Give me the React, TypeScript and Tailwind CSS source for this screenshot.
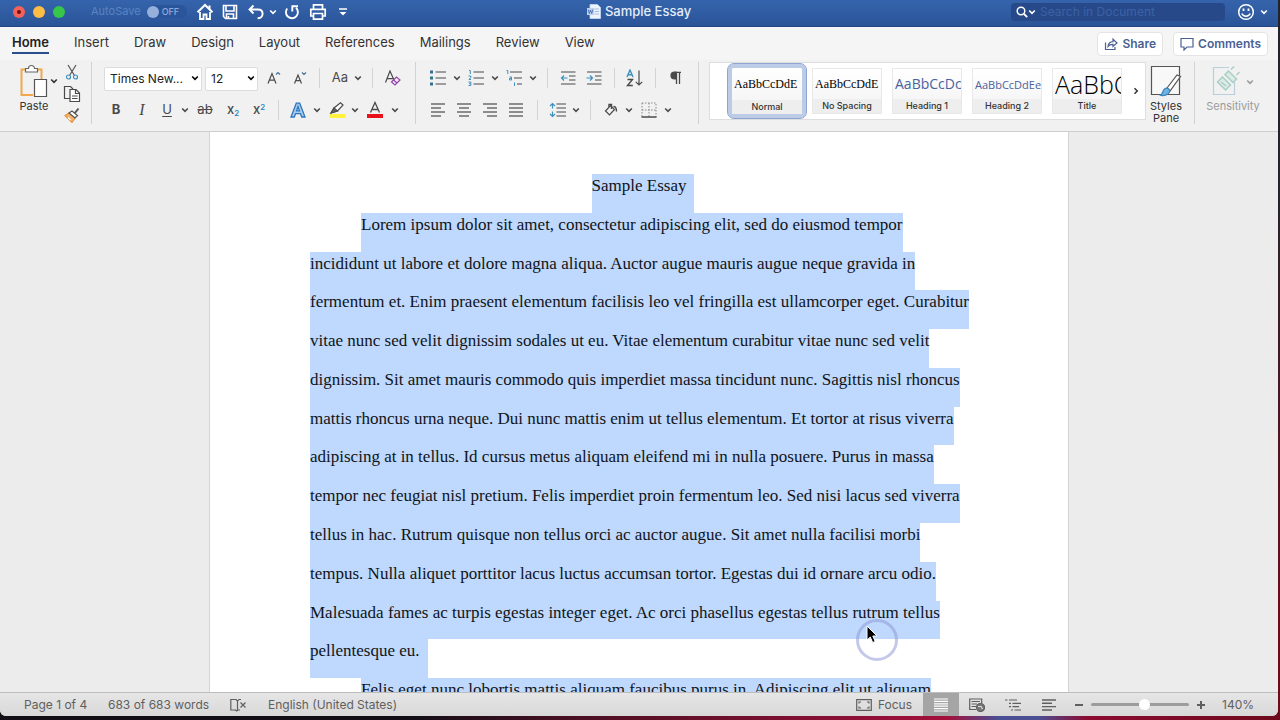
import type { ReactNode } from 'react';

interface EssayLine {
    text: string;
    indent?: boolean;
    centered?: boolean;
    end?: boolean;
}

interface StylePreset {
    name: string;
    sample: string;
    sampleClass: string;
    selected?: boolean;
}

const tabs = ['Home', 'Insert', 'Draw', 'Design', 'Layout', 'References', 'Mailings', 'Review', 'View'];

const essay: EssayLine[] = [
    { text: 'Sample Essay', centered: true, end: true },
    { text: 'Lorem ipsum dolor sit amet, consectetur adipiscing elit, sed do eiusmod tempor', indent: true },
    { text: 'incididunt ut labore et dolore magna aliqua. Auctor augue mauris augue neque gravida in' },
    { text: 'fermentum et. Enim praesent elementum facilisis leo vel fringilla est ullamcorper eget. Curabitur' },
    { text: 'vitae nunc sed velit dignissim sodales ut eu. Vitae elementum curabitur vitae nunc sed velit' },
    { text: 'dignissim. Sit amet mauris commodo quis imperdiet massa tincidunt nunc. Sagittis nisl rhoncus' },
    { text: 'mattis rhoncus urna neque. Dui nunc mattis enim ut tellus elementum. Et tortor at risus viverra' },
    { text: 'adipiscing at in tellus. Id cursus metus aliquam eleifend mi in nulla posuere. Purus in massa' },
    { text: 'tempor nec feugiat nisl pretium. Felis imperdiet proin fermentum leo. Sed nisi lacus sed viverra' },
    { text: 'tellus in hac. Rutrum quisque non tellus orci ac auctor augue. Sit amet nulla facilisi morbi' },
    { text: 'tempus. Nulla aliquet porttitor lacus luctus accumsan tortor. Egestas dui id ornare arcu odio.' },
    { text: 'Malesuada fames ac turpis egestas integer eget. Ac orci phasellus egestas tellus rutrum tellus' },
    { text: 'pellentesque eu.', end: true },
    { text: 'Felis eget nunc lobortis mattis aliquam faucibus purus in. Adipiscing elit ut aliquam', indent: true },
];

const presets: StylePreset[] = [
    { name: 'Normal', sample: 'AaBbCcDdE', sampleClass: "font-['Liberation_Serif',serif] text-[12px] text-black", selected: true },
    { name: 'No Spacing', sample: 'AaBbCcDdE', sampleClass: "font-['Liberation_Serif',serif] text-[12px] text-black" },
    { name: 'Heading 1', sample: 'AaBbCcDc', sampleClass: "font-['Open_Sans',sans-serif] text-[14px] text-[#4a62a0]" },
    { name: 'Heading 2', sample: 'AaBbCcDdEe', sampleClass: "font-['Open_Sans',sans-serif] text-[11px] text-[#4a62a0]" },
    { name: 'Title', sample: 'AaBbC', sampleClass: "font-['Open_Sans',sans-serif] text-[25px] font-light text-black" },
];

const Icon = ({ w = 18, h = 18, className = '', children }: { w?: number; h?: number; className?: string; children: ReactNode }) => (
    <svg width={w} height={h} viewBox={`0 0 ${w} ${h}`} fill="none" stroke="currentColor" strokeWidth="1.2" className={`shrink-0 ${className}`} aria-hidden="true">
        {children}
    </svg>
);

const Chevron = ({ className = '' }: { className?: string }) => (
    <Icon w={8} h={6} className={className}>
        <path d="M1.2 1.5 4 4.3 6.8 1.5" strokeWidth="1.6" />
    </Icon>
);

const Tool = ({ label, width, height = 'h-6', children }: { label: string; width: string; height?: string; children: ReactNode }) => (
    <button type="button" aria-label={label} className={`flex shrink-0 items-center justify-center text-[#4a4a4a] ${width} ${height}`}>
        {children}
    </button>
);

const More = ({ label, width = 'w-[10px]' }: { label: string; width?: string }) => (
    <Tool label={label} width={width}>
        <Chevron />
    </Tool>
);

const Rule = ({ width }: { width: string }) => (
    <div className={`flex shrink-0 justify-center ${width}`}>
        <div className="h-5 w-px bg-[#d4d4d4]" />
    </div>
);

const GroupRule = ({ width }: { width: string }) => (
    <div className={`flex shrink-0 justify-center ${width}`}>
        <div className="h-[62px] w-px bg-[#d2d2d2]" />
    </div>
);

const Lines = ({ rows }: { rows: [number, number][] }) => (
    <Icon w={16} h={16}>
        {rows.map(([from, to], i) => (
            <path key={i} d={`M${from} ${2 + i * 4}H${to}`} />
        ))}
    </Icon>
);

const TitleBar = () => (
    <header className="flex h-[27px] shrink-0 items-center border-b border-[#234680] bg-linear-to-b from-[#3564ac] to-[#2a5498] pb-[3px] text-white">
        <div className="flex flex-1 items-center pl-[10px]">
            <div className="flex gap-2 pl-[3px]">
                <button type="button" aria-label="Close" className="flex size-3 items-center justify-center rounded-full bg-[#f4605a]">
                    <span className="size-1 rounded-full bg-[#6d0f0c]" />
                </button>
                <button type="button" aria-label="Minimise" className="size-3 rounded-full bg-[#fbbd45]" />
                <button type="button" aria-label="Zoom" className="size-3 rounded-full bg-[#35c64b]" />
            </div>
            <label className="ml-[26px] flex items-center gap-[6px] text-[11px] text-[#5b84c2]">
                AutoSave
                <span className="flex h-[13px] w-10 items-center gap-[3px] rounded-full bg-[#2b559a]">
                    <input type="checkbox" className="size-3 appearance-none rounded-full bg-[#96b0dc]" />
                    <span className="text-[9px] font-medium text-[#8fabda]">OFF</span>
                </span>
            </label>
            <div className="flex items-center pl-[6px]">
                <button type="button" aria-label="Home" className="flex w-[25px] justify-center">
                    <Icon>
                        <path d="M1.5 9.2 9 2l7.5 7.2" strokeWidth="2" />
                        <path d="M13.5 2.5v3.5" strokeWidth="2" />
                        <path d="M4 9v7h3.5v-4.5h3V16H14V9" strokeWidth="1.8" />
                    </Icon>
                </button>
                <button type="button" aria-label="Save" className="flex w-[25px] justify-center">
                    <Icon w={16} h={16}>
                        <path d="M1.5 1.5h13v13H3.5l-2-2z" strokeWidth="1.6" />
                        <path d="M4 2v5h8V2M4.5 14.5V10h7v4.5M6.5 14v-2" strokeWidth="1.6" />
                    </Icon>
                </button>
                <button type="button" aria-label="Undo" className="flex w-[26px] justify-center">
                    <Icon w={16} h={16}>
                        <path d="M5.5 1.5 1.5 5.5l4 4M1.8 5.5H10c3 0 4.6 1.8 4.6 4.3 0 2.6-2 4.500-5 4.500" strokeWidth="1.9" />
                    </Icon>
                </button>
                <button type="button" aria-label="Undo history" className="flex w-2 justify-center"><Chevron /></button>
                <button type="button" aria-label="Repeat" className="flex w-[30px] justify-center">
                    <Icon w={16} h={16}>
                        <path d="M3.2 4.5A6 6 0 1 0 12 3.800" strokeWidth="1.9" />
                        <path d="M8.3 7.5V2.2h5.7" strokeWidth="1.9" />
                    </Icon>
                </button>
                <button type="button" aria-label="Print" className="flex w-[22px] justify-center">
                    <Icon w={18} h={18}>
                        <path d="M4.5 6V1.8h9V6M4.5 13H1.8V6.3h14.4V13h-2.7M4.5 10.5h9v5.7h-9z" strokeWidth="1.7" />
                    </Icon>
                </button>
                <button type="button" aria-label="Customise toolbar" className="flex w-[28px] justify-center">
                    <Icon w={10} h={10}>
                        <path d="M1 2h8" strokeWidth="1.5" />
                        <path d="M1.5 5h7L5 8.5z" fill="currentColor" stroke="none" />
                    </Icon>
                </button>
            </div>
        </div>
        <h1 className="flex items-center gap-1 text-[13px] font-medium text-[#e3ecfa]">
            <Icon w={14} h={15}>
                <path d="M3 .5h7.5L13.5 3.5v11H3z" fill="#eef4fd" stroke="#c8d9f2" strokeWidth=".8" />
                <path d="M7.5 5h4.5M7.5 7.5h4.5M7.5 10h4.5" stroke="#8eaedb" strokeWidth=".8" />
                <path d="M0 4h7v7H0z" fill="#bdd1ef" stroke="none" />
                <path d="M1.2 5.5 2.3 9.5 3.5 6l1.2 3.5 1.1-4" stroke="#3564ac" strokeWidth=".8" />
            </Icon>
            Sample Essay
        </h1>
        <div className="flex flex-1 items-center justify-end gap-3 pr-[10px]">
            <div className="flex h-[18px] w-[214px] items-center rounded-sm bg-[#27498a] pl-[5px]">
                <Icon w={12} h={12}>
                    <circle cx="5" cy="5" r="3.8" strokeWidth="1.5" />
                    <path d="m8 8 3.2 3.2" strokeWidth="1.8" />
                </Icon>
                <Chevron />
                <input aria-label="Search in Document" placeholder="Search in Document" className="w-full bg-transparent pl-1 text-[12px] text-white placeholder:text-[#3c62a5]" />
            </div>
            <button type="button" aria-label="Feedback" className="flex items-center gap-[5px]">
                <Icon w={18} h={18}>
                    <circle cx="9" cy="9" r="7.3" strokeWidth="1.5" />
                    <path d="M6.5 5.5v2.5M11.5 5.5v2.5" strokeWidth="1.8" />
                    <path d="M4.8 10.5c1.3 3.500 7.1 3.500 8.4 0" strokeWidth="1.5" />
                </Icon>
                <Chevron />
            </button>
        </div>
    </header>
);

const TabBar = () => (
    <nav className="flex h-[33px] shrink-0 items-center bg-[#f5f5f5] pr-[10px] pl-3">
        <div className="flex flex-1 gap-[25px] text-[13px] text-[#333]">
            {tabs.map((tab) => (
                <button key={tab} type="button" className={tab === 'Home' ? 'border-b-2 border-[#2b4f8c] font-semibold text-[#222]' : 'border-b-2 border-transparent'}>
                    {tab}
                </button>
            ))}
        </div>
        <div className="flex gap-[10px] text-[12px] font-semibold text-[#4a6294]">
            <button type="button" className="flex h-6 items-center gap-1 rounded-sm border border-[#e4e4e4] bg-white px-[6px]">
                <Icon w={14} h={14}>
                    <path d="M1.5 5.5v7h9.5V10" />
                    <path d="M4 9.5c.3-3.300 2-4.800 5-4.900V2.200L13 6 9 9.500V7.300C6.800 7.200 5.300 7.800 4 9.500z" />
                </Icon>
                Share
            </button>
            <button type="button" className="flex h-6 items-center gap-1 rounded-sm border border-[#e4e4e4] bg-white px-[6px]">
                <Icon w={14} h={14}>
                    <path d="M1 1.5h12v8.500H7l-3 3v-3H1z" />
                </Icon>
                Comments
            </button>
        </div>
    </nav>
);

const ClipboardGroup = () => (
    <>
        <button type="button" className="flex w-16 shrink-0 items-start pt-[2px] pl-[14px] text-[11px] text-[#333]">
            <span className="flex w-10 shrink-0 flex-col items-center">
                <Icon w={30} h={34}>
                    <path d="M6 5.5H2.5V31H14M19 5.5h3.5V15" stroke="#f0a74e" strokeWidth="2" />
                    <path d="M6.5 8V4.5h3a3 3 0 0 1 6 0h3V8z" fill="#fff" stroke="#666" />
                    <path d="M15.5 15.5h12v17h-12z" fill="#fdfdfd" stroke="#555" />
                </Icon>
                Paste
            </span>
            <span className="-ml-1 pt-[14px]"><Chevron /></span>
        </button>
        <div className="flex w-4 shrink-0 flex-col items-center">
            <Tool label="Cut" width="w-5" height="h-[21px]">
                <Icon w={14} h={17}>
                    <path d="M3 1 9.5 11.500M11 1 4.5 11.500" stroke="#555" />
                    <circle cx="3.5" cy="13" r="2" stroke="#3f8fbd" />
                    <circle cx="10.5" cy="13" r="2" stroke="#3f8fbd" />
                </Icon>
            </Tool>
            <Tool label="Copy" width="w-5" height="h-[21px]">
                <Icon w={18} h={18}>
                    <path d="M7 13.500H1.500v-12h6L10 4" />
                    <path d="M7 4.500h6l3.500 3.500v8.500H7z" fill="#fff" />
                    <path d="M12.500 4.500v4h4M9 11h5.500M9 13.500h5.500" />
                </Icon>
            </Tool>
            <Tool label="Format painter" width="w-5" height="h-[21px]">
                <Icon w={16} h={16}>
                    <path d="M1 8.500 5 6l6 5-3 4.500z" fill="#f5b36a" stroke="#e7963f" />
                    <path d="M5 6l3-2 5.500 4.500L11 11z" fill="#fff" stroke="#555" />
                    <path d="m10.500 6.500 4-5" stroke="#555" strokeWidth="2" />
                    <path d="M4 10.500 6.500 13" stroke="#fff" />
                </Icon>
            </Tool>
        </div>
    </>
);

const FontGroup = () => (
    <div className="flex shrink-0 flex-col gap-2">
        <div className="flex h-6 items-center">
            <div className="relative mr-[3px] ml-px">
                <select aria-label="Font" className="h-6 w-[98px] appearance-none rounded-xs border border-[#dcdcdc] bg-white pl-[5px] text-[12px] text-[#222]">
                    <option>Times New...</option>
                </select>
                <Chevron className="pointer-events-none absolute top-[10px] right-[3px]" />
            </div>
            <div className="relative">
                <select aria-label="Font size" className="h-6 w-[53px] appearance-none rounded-xs border border-[#dcdcdc] bg-white pl-[5px] text-[12px] text-[#222]">
                    <option>12</option>
                </select>
                <Chevron className="pointer-events-none absolute top-[10px] right-[3px]" />
            </div>
            <Tool label="Increase font size" width="w-8">
                <Icon w={14} h={14}>
                    <path d="M1 12.500 5 2.500l4 10M2.300 9.200h5.400" />
                    <path d="M9 3.500 11 1.500l2 2" stroke="#41719c" />
                </Icon>
            </Tool>
            <Tool label="Decrease font size" width="w-5">
                <Icon w={14} h={14}>
                    <path d="M1.500 12.500 5 4l3.500 8.500M2.600 9.700h4.800" />
                    <path d="M9 1.500 11 3.500l2-2" stroke="#41719c" />
                </Icon>
            </Tool>
            <Rule width="w-[18px]" />
            <Tool label="Change case" width="w-6"><span className="text-[13px]">Aa</span></Tool>
            <More label="Case options" width="w-3" />
            <Rule width="w-4" />
            <Tool label="Clear formatting" width="w-[26px]">
                <Icon w={18} h={18}>
                    <path d="M1.500 13.500 6 2l4 9M3 9.700h6" />
                    <path d="m7.500 13 5-5 3.500 3-5 5z" stroke="#9345a8" fill="#f7eefa" />
                    <path d="m9.500 11 3.500 3" stroke="#9345a8" />
                </Icon>
            </Tool>
        </div>
        <div className="flex h-6 items-center text-[13px]">
            <Tool label="Bold" width="w-[26px]"><b>B</b></Tool>
            <Tool label="Italic" width="w-[26px]"><i className="font-['Liberation_Serif',serif] text-[16px]">I</i></Tool>
            <Tool label="Underline" width="w-6"><u className="underline-offset-2">U</u></Tool>
            <More label="Underline styles" width="w-3" />
            <Tool label="Strikethrough" width="w-7"><s>ab</s></Tool>
            <Tool label="Subscript" width="w-7">
                <span className="font-medium">x<sub className="text-[8px] text-[#2d7fb8]">2</sub></span>
            </Tool>
            <Tool label="Superscript" width="w-6">
                <span className="font-medium">x<sup className="text-[8px] text-[#2d7fb8]">2</sup></span>
            </Tool>
            <Rule width="w-[14px]" />
            <Tool label="Text effects" width="w-[26px]">
                <Icon w={16} h={16}>
                    <path d="M1 15 6.300 1.200h3.400L15 15h-3.300l-1.200-3.300h-5L4.300 15zM6.500 8.800h3L8 4.500z" fill="#a9cdf0" stroke="#2f77bd" strokeWidth="1.3" />
                </Icon>
            </Tool>
            <More label="Text effect options" width="w-3" />
            <Tool label="Highlight" width="w-7">
                <Icon w={18} h={18}>
                    <path d="M1.500 13h16v4h-16z" fill="#fff23c" stroke="none" />
                    <path d="M3 12 6 7 12.500 1.800 15 4 9.500 10z" fill="#fff" />
                    <path d="m3 12 3-5 3.500 3z" fill="#666" />
                </Icon>
            </Tool>
            <More label="Highlight colours" width="w-2" />
            <Tool label="Font colour" width="w-8">
                <Icon w={16} h={18}>
                    <path d="M0 13h16v4H0z" fill="#e8121c" stroke="none" />
                    <path d="M3.500 11.500 8 1.500l4.500 10M5 8.500h6" strokeWidth="1.3" />
                </Icon>
            </Tool>
            <More label="Font colours" width="w-2" />
        </div>
    </div>
);

const ParagraphGroup = () => (
    <div className="flex w-[268px] shrink-0 flex-col gap-2">
        <div className="flex h-6 items-center">
            <Tool label="Bullets" width="w-7">
                <Icon w={16} h={16}>
                    <path d="M0 2h3M0 8h3M0 14h3" stroke="#35708f" strokeWidth="3" />
                    <path d="M5.500 2H16M5.500 8H16M5.500 14H16" />
                </Icon>
            </Tool>
            <More label="Bullet library" />
            <Tool label="Numbering" width="w-7">
                <Icon w={16} h={18}>
                    <path d="M1 1.500h1.300V5M.5 7h2.300v1.500L1 10.500h2M.5 13h2.300v3.500H.5M1 14.700h1.500" stroke="#3f8fbd" strokeWidth="1" />
                    <path d="M5.500 3H16M5.500 9H16M5.500 15H16" />
                </Icon>
            </Tool>
            <More label="Number library" />
            <Tool label="Multilevel list" width="w-7">
                <Icon w={16} h={18}>
                    <path d="M.5 1.500h1.300V5M3.500 8h2v3h-2V9.500h2M8.500 13.500V17" stroke="#3f8fbd" strokeWidth="1" />
                    <path d="M4 3h12M8 9h8M11 15h5" />
                </Icon>
            </Tool>
            <More label="List library" />
            <Rule width="w-[18px]" />
            <Tool label="Decrease indent" width="w-6">
                <Icon w={16} h={14}>
                    <path d="M1 1h14.500M9 5h6.500M9 9h6.500M1 13h14.500" />
                    <path d="M7.500 7H1.500M4 4.500 1.500 7 4 9.500" stroke="#3f8fbd" />
                </Icon>
            </Tool>
            <Tool label="Increase indent" width="w-7">
                <Icon w={16} h={14}>
                    <path d="M1 1h14.500M9 5h6.500M9 9h6.500M1 13h14.500" />
                    <path d="M.5 7h6M4 4.500 6.500 7 4 9.500" stroke="#3f8fbd" />
                </Icon>
            </Tool>
            <Rule width="w-3" />
            <Tool label="Sort" width="w-[30px]">
                <Icon w={18} h={18}>
                    <path d="m1 8 3-7 3 7M2 5.700h4" stroke="#3f8fbd" strokeWidth="1.4" />
                    <path d="M1.500 10.500h5l-5 6h5.300" strokeWidth="1.4" />
                    <path d="M13 1.500v14.500M9.800 12.800 13 16l3.200-3.200" />
                </Icon>
            </Tool>
            <Rule width="w-[10px]" />
            <Tool label="Show paragraph marks" width="w-8">
                <Icon w={12} h={14}>
                    <path d="M6 1H4.500a3.500 3.500 0 0 0 0 7H6z" fill="currentColor" />
                    <path d="M5 1.300h6M6.500 1v12M9.500 1v12" strokeWidth="1.3" />
                </Icon>
            </Tool>
        </div>
        <div className="flex h-6 items-center">
            <Tool label="Align left" width="w-7"><Lines rows={[[1, 15], [1, 11], [1, 15], [1, 11]]} /></Tool>
            <Tool label="Centre" width="w-6"><Lines rows={[[1, 15], [3, 13], [1, 15], [3, 13]]} /></Tool>
            <Tool label="Align right" width="w-7"><Lines rows={[[1, 15], [5, 15], [1, 15], [5, 15]]} /></Tool>
            <Tool label="Justify" width="w-6"><Lines rows={[[1, 15], [1, 15], [1, 15], [1, 15]]} /></Tool>
            <Rule width="w-[18px]" />
            <Tool label="Line spacing" width="w-6">
                <Icon w={18} h={16}>
                    <path d="M7.500 2H17M7.500 6H17M7.500 10H17M7.500 14H17" />
                    <path d="M3.500 1.500v5M1 4l2.500-2.500L6 4M3.500 14.500v-5M1 12l2.500 2.500L6 12" stroke="#3f8fbd" />
                </Icon>
            </Tool>
            <More label="Spacing options" width="w-3" />
            <Rule width="w-4" />
            <Tool label="Shading" width="w-[26px]">
                <Icon w={14} h={14}>
                    <path d="M1.500 8 6.500 2.500 10.500 6.500 5.500 12z" />
                    <path d="M5 4V1.500h2.500V6M9.500 3.500c2.500 0 3 1.500 3 5" strokeWidth="1.4" />
                </Icon>
            </Tool>
            <More label="Shading colours" />
            <Tool label="Borders" width="w-[30px]">
                <Icon w={16} h={16}>
                    <path d="M1 1h14v14M1 1v14M8 1v14M1 8h14" stroke="#8a8a8a" strokeDasharray="1.5 1.5" strokeWidth="1" />
                    <path d="M.5 15h15" strokeWidth="1.5" />
                </Icon>
            </Tool>
            <More label="Border options" width="w-2" />
        </div>
    </div>
);

const StyleGallery = () => (
    <div className="mr-1 ml-[5px] flex h-[58px] min-w-0 flex-1 items-center gap-[10px] border border-[#dedede] bg-white pl-[22px]">
        {presets.map((preset) => (
            <button
                key={preset.name}
                type="button"
                className={`flex h-[46px] w-[70px] shrink-0 flex-col bg-linear-to-b from-white to-[#f2f2f2] ${
                    preset.selected ? 'rounded-xs ring-4 ring-[#bccbe6] outline outline-offset-4 outline-[#8da5cf]' : 'border border-[#e8e8e8]'
                }`}
            >
                <span className={`flex h-8 w-full items-center overflow-hidden px-[2px] leading-none whitespace-nowrap ${preset.sampleClass}`}>{preset.sample}</span>
                <span className="w-full bg-[#eeeeee] text-center text-[9px] leading-[14px] font-medium text-[#333]">{preset.name}</span>
            </button>
        ))}
        <button type="button" aria-label="More styles" className="flex w-2 shrink-0 justify-center text-[#333]">
            <Icon w={6} h={8}><path d="M1.500 1.200 4.300 4 1.500 6.800" strokeWidth="1.5" /></Icon>
        </button>
    </div>
);

const Ribbon = () => (
    <div className="flex h-[72px] shrink-0 border-b border-[#cfcfcf] bg-[#f1f1f1] pt-[2px]">
        <ClipboardGroup />
        <GroupRule width="w-[23px]" />
        <div className="flex min-w-0 flex-1">
            <div className="pt-1"><FontGroup /></div>
            <GroupRule width="w-[18px]" />
            <div className="pt-1"><ParagraphGroup /></div>
            <GroupRule width="w-3" />
            <StyleGallery />
            <button type="button" className="flex w-8 shrink-0 flex-col items-center pt-[2px] text-[11px] leading-3 text-[#333]">
                <Icon w={32} h={36}>
                    <path d="M1.500 2.500h28v28h-28z" fill="#f8f8f8" stroke="#555" />
                    <path d="m17 24 10-13 3.500 1.500L20 27z" fill="#fff" stroke="#555" />
                    <path d="M9.500 31c4 0 2.500-4 5-6 3-2 6 .5 5 3-1 3-6 4.500-10 3z" fill="#6fb2e4" stroke="#3d85bd" />
                </Icon>
                Styles
                <span>Pane</span>
            </button>
            <GroupRule width="w-6" />
            <button type="button" className="mr-[18px] flex w-[54px] shrink-0 flex-col items-center pt-[2px] text-[11px] leading-3 text-[#9b9b9b]">
                <span className="flex items-center">
                    <Icon w={28} h={36}>
                        <path d="M17 3.500H1.500v27h21V18" stroke="#b9cfdb" />
                        <path d="m5.500 18 5-5 8 8-5 5zM13 10.500l3.500-3.500 8 8-3.500 3.500zM19 5.500l3-3M24.500 11l3-3M9 18l5 4" fill="#dcebe6" stroke="#a8cfc4" strokeWidth="1.5" />
                    </Icon>
                    <Chevron className="ml-[6px]" />
                </span>
                Sensitivity
            </button>
        </div>
    </div>
);

const Document = () => (
    <main className="min-h-0 flex-1 overflow-hidden bg-[#ececec]">
        <article className="relative mx-auto h-full max-w-[860px] border-x border-[#d5d5d5] bg-white px-[100px] pt-[42px]">
            <div className="grid h-[543px] grid-cols-1 grid-rows-14 font-['Liberation_Serif',serif] text-[17px] leading-6 whitespace-nowrap text-[#101418]">
                {essay.map((line) => (
                    <p key={line.text} className={`flex ${line.centered ? 'justify-center' : ''} ${line.indent ? 'pl-[51px]' : ''}`}>
                        <span className={`bg-[#bfd8fd] ${line.end ? '-mr-2 pr-2' : ''}`}>{line.text}</span>
                    </p>
                ))}
            </div>
            {/* mouse pointer with its click ring */}
            <div className="absolute top-[487px] left-[646px] size-[42px] rounded-full border-[3px] border-[#8c94d4]/50" />
            <Icon w={14} h={20} className="absolute top-[493px] left-[656px]">
                <path d="M1 1v14l3.300-3 2.400 5.500 2.500-1-2.400-5.500H11z" fill="#000" stroke="#fff" strokeWidth="1" />
            </Icon>
        </article>
    </main>
);

const StatusBar = () => (
    <footer className="flex h-6 shrink-0 items-center border-t border-[#bdbdbd] bg-linear-to-b from-[#e6e6e6] to-[#d8d8d8] pr-6 pl-6 text-[12px] text-[#5f5f5f]">
        <div className="flex flex-1 items-center">
            <span className="w-[84px]">Page 1 of 4</span>
            <span className="w-[122px]">683 of 683 words</span>
            <button type="button" aria-label="Proofing" className="w-[38px]">
                <Icon w={16} h={14}>
                    <path d="M7.500 2v11M10 12H7.500L6.500 13 5.500 12H.8V1.500H6L7.500 3l1.500-1.500h2" />
                    <path d="m10.500 4.500 5 5M15.500 4.500l-5 5" />
                </Icon>
            </button>
            <span>English (United States)</span>
        </div>
        <button type="button" className="flex items-center gap-[6px] pr-[11px]">
            <Icon w={16} h={12}>
                <path d="M.7.7h14.600v10.600H.7z" />
                <path d="M3 4.500V3h2M11 3h2v1.500M3 7.500V9h2M11 9h2V7.500" />
            </Icon>
            Focus
        </button>
        <button type="button" aria-label="Print layout" className="flex h-[23px] w-9 items-center justify-center bg-[#a5a5a5]">
            <Icon w={14} h={14} className="text-white">
                <path d="M0 1h14M0 3.400h14M0 5.800h14M0 8.200h14M0 10.600h14M0 13h14" />
            </Icon>
        </button>
        <button type="button" aria-label="Web layout" className="flex w-9 justify-center">
            <Icon w={16} h={14}>
                <path d="M7 11.500H.7V1h12v4M2.500 3.500h8.500M2.500 6H8M2.500 8.500H7" />
                <circle cx="11.5" cy="9.5" r="4" fill="#777" />
                <path d="M9 8.500h3l1.500 2.500" stroke="#ddd" />
            </Icon>
        </button>
        <button type="button" aria-label="Outline" className="flex w-9 justify-center">
            <Icon w={16} h={12}>
                <path d="M0 1h2.500M4 1h8M4 4.300h2M7.500 4.300H16M4 7.600h2M7.500 7.600H14M6 11h2M9.500 11H16" />
            </Icon>
        </button>
        <button type="button" aria-label="Draft" className="flex w-9 justify-center">
            <Icon w={14} h={12}><path d="M0 1h14M0 4.300h10M0 7.600h14M0 11h10" strokeWidth="1.4" /></Icon>
        </button>
        <button type="button" aria-label="Zoom out" className="flex w-6 justify-center">
            <Icon w={8} h={8}><path d="M0 4h8" strokeWidth="2" /></Icon>
        </button>
        <input
            type="range"
            aria-label="Zoom level"
            min={0}
            max={100}
            defaultValue={55}
            className="h-[3px] w-[98px] appearance-none rounded-full bg-[#9c9c9c] [&::-webkit-slider-thumb]:size-[11px] [&::-webkit-slider-thumb]:appearance-none [&::-webkit-slider-thumb]:rounded-full [&::-webkit-slider-thumb]:bg-white"
        />
        <button type="button" aria-label="Zoom in" className="flex w-6 justify-center">
            <Icon w={8} h={8}><path d="M0 4h8M4 0v8" strokeWidth="2" /></Icon>
        </button>
        <span className="w-[41px] text-right">140%</span>
    </footer>
);

const App = () => (
    <div className="h-screen overflow-hidden bg-[linear-gradient(to_bottom,#22242c_25%,transparent_85%),linear-gradient(to_right,#120e16_32%,#4a0f22_45%,#a3103c_74%,#4a4f94_78%,#4a4f94_81%,#8c0a30_85%,#6d0a1c)] pr-[2px] pb-1 font-['Inter',sans-serif]">
        <div className="flex h-full flex-col overflow-hidden rounded-b-md bg-[#ececec]">
            <TitleBar />
            <TabBar />
            <Ribbon />
            <Document />
            <StatusBar />
        </div>
    </div>
);

export default App;
